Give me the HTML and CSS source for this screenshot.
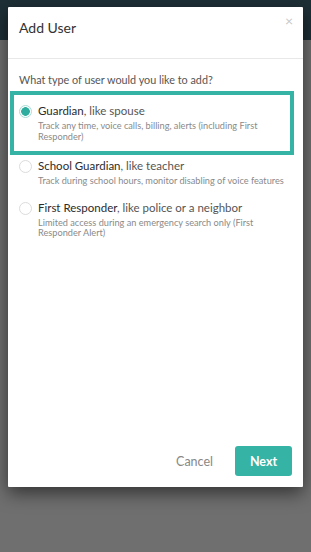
FILE: index.html
```html
<!DOCTYPE html>
<html>
<head>
    <link rel="stylesheet" href="styles.css">
    <title>Add User</title>
</head>
<body>
    <div class="modal">
        <div class="modal-header">
            <h4>Add User</h4>
            <span class="close">&times;</span>
        </div>
        <div class="modal-body">
            <p class="question">What type of user would you like to add?</p>
            <div class="option selected">
                <span class="radio"></span>
                <div>
                    <div class="label"><b>Guardian</b>, like spouse</div>
                    <div class="desc">Track any time, voice calls, billing, alerts (including First Responder)</div>
                </div>
            </div>
            <div class="option">
                <span class="radio"></span>
                <div>
                    <div class="label"><b>School Guardian</b>, like teacher</div>
                    <div class="desc">Track during school hours, monitor disabling of voice features</div>
                </div>
            </div>
            <div class="option">
                <span class="radio"></span>
                <div>
                    <div class="label"><b>First Responder</b>, like police or a neighbor</div>
                    <div class="desc">Limited access during an emergency search only (First Responder Alert)</div>
                </div>
            </div>
        </div>
        <div class="modal-footer">
            <button class="btn-cancel">Cancel</button>
            <button class="btn-next">Next</button>
        </div>
    </div>
</body>
</html>
```

FILE: styles.css
```css
body {
    margin: 0;
    height: 552px;
    background: linear-gradient(#1e2f36 0, #1e2f36 40px, #6f6f6f 40px);
    font-family: 'Lato', sans-serif;
    overflow: hidden;
}
.modal {
    margin: 7px 8px 0 8px;
    width: 295px;
    height: 480px;
    background-color: #fff;
    box-shadow: 0 6px 18px rgba(0, 0, 0, 0.55);
    display: flex;
    flex-direction: column;
    border-radius: 1px;
}
.modal-header {
    height: 51px;
    border-bottom: 1px solid #e8e8e8;
    display: flex;
    justify-content: space-between;
    padding: 0 10px 0 11px;
}
.modal-header h4 {
    margin: 12px 0 0 0;
    font-size: 14px;
    font-weight: normal;
    color: #333;
}
.close {
    margin-top: 5px;
    font-size: 14px;
    color: #c8c8c8;
}
.modal-body {
    flex: 1;
    padding: 14px 9px 0 2px;
}
.question {
    margin: 0 0 4px 9px;
    font-size: 10.8px;
    line-height: 14px;
    color: #555;
}
.option {
    display: flex;
    align-items: flex-start;
    padding: 0 6px 6px 5px;
    border: 4px solid transparent;
}
.option.selected {
    border-color: #35b3a5;
    padding: 9px 6px 9px 5px;
}
.radio {
    flex: none;
    width: 13px;
    height: 13px;
    border: 1px solid #dcdcdc;
    border-radius: 50%;
    margin: 1px 6px 0 0;
    box-sizing: border-box;
}
.selected .radio {
    border-color: #a9ddd6;
    background: radial-gradient(circle, #2fae9f 0, #2fae9f 4px, #fff 4.6px);
}
.label {
    font-size: 11.5px;
    line-height: 14px;
    color: #555;
}
.label b {
    font-weight: normal;
    color: #2b2b2b;
}
.desc {
    margin-top: 3px;
    font-size: 9.2px;
    line-height: 10.5px;
    color: #8a8a8a;
}
.modal-footer {
    display: flex;
    justify-content: flex-end;
    align-items: center;
    padding: 0 11px 11px 0;
    gap: 16px;
}
.btn-cancel {
    border: none;
    background: none;
    font-family: inherit;
    font-size: 12.5px;
    color: #888;
}
.btn-next {
    width: 57px;
    height: 30px;
    border: none;
    border-radius: 3px;
    background-color: #35b3a5;
    color: #fff;
    font-family: inherit;
    font-size: 12.5px;
    font-weight: bold;
}
```
